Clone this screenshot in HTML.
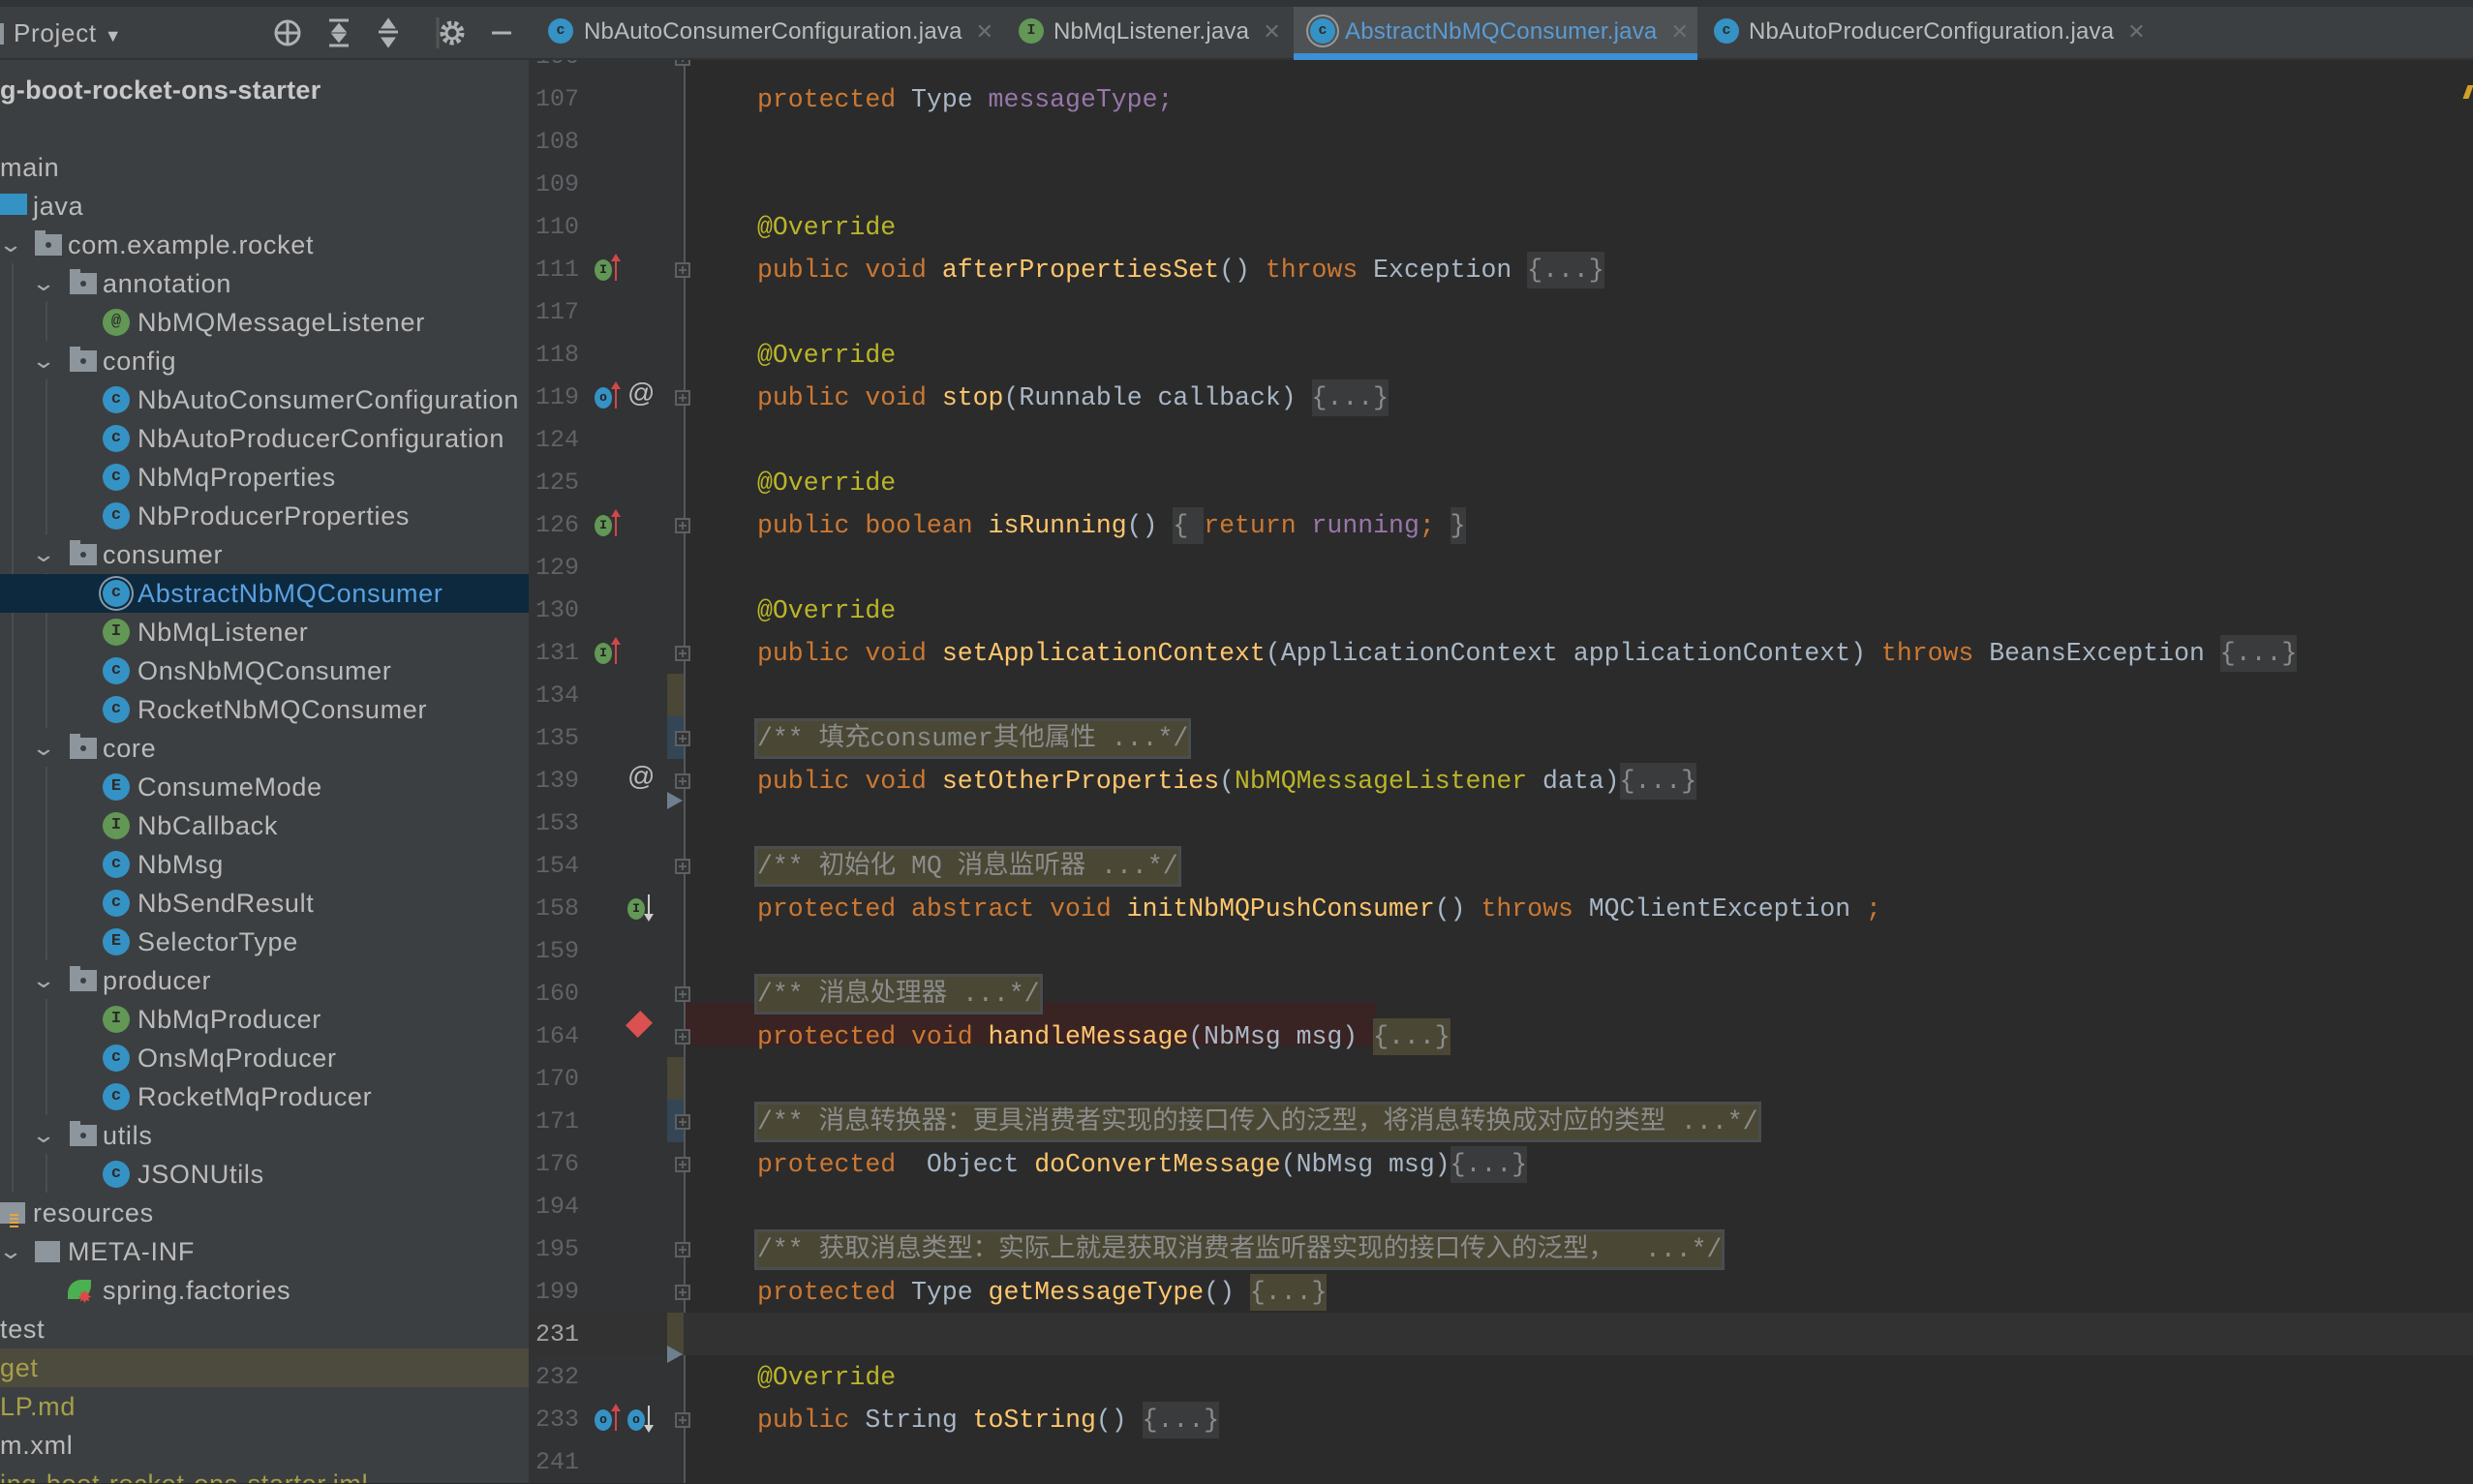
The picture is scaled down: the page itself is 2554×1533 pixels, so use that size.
<!DOCTYPE html>
<html><head><meta charset="utf-8">
<style>
*{margin:0;padding:0;box-sizing:border-box}
body{width:2554px;height:1532px;overflow:hidden;background:#2b2b2b;position:relative;font-family:"Liberation Sans","Noto Sans CJK SC",sans-serif}
.abs{position:absolute}
#side{left:0;top:0;width:546px;height:1532px;background:#3c3f41;overflow:hidden}
#tabs{left:546px;top:0;width:2008px;height:62px;background:#3c3f41;border-bottom:2px solid #323232;z-index:5}
#stb{left:0;top:0;width:546px;height:62px;background:#3c3f41;border-bottom:2px solid #323232}
.topline{left:0;top:0;width:2554px;height:7px;background:#313335;z-index:7}
.tr{position:absolute;height:40px;line-height:40px;font-size:27px;letter-spacing:0.7px;color:#bbbbbb;white-space:nowrap}
.ic{position:absolute;width:28px;height:28px;border-radius:50%;top:6px;font-size:17px;line-height:28px;text-align:center;color:#2b2b2b;font-weight:bold;letter-spacing:0;font-family:"Liberation Mono",monospace}
.C{background:#3592c4}.I{background:#629755}.E{background:#3592c4}.AN{background:#629755}
.fold{position:absolute;width:28px;height:22px;top:9px;background:#8e969d}
.fold:before{content:"";position:absolute;left:0;top:-4px;width:11px;height:5px;background:#8e969d}
.fold:after{content:"";position:absolute;left:11px;top:8px;width:6px;height:6px;border-radius:50%;background:#3c3f41}
.chev{position:absolute;top:0;font-size:22px;color:#aaa;transform:scaleX(1.4)}
#gut{left:546px;top:62px;width:160px;height:1470px;background:#313335}
.ln{position:absolute;left:540px;width:58px;text-align:right;height:44px;line-height:44px;font-family:"Liberation Mono",monospace;font-size:25px;color:#606366}
.cl{position:absolute;left:782px;height:44px;line-height:44px;font-family:"Liberation Mono","Noto Sans CJK SC",monospace;font-size:26.5px;color:#a9b7c6;white-space:pre}
.k{color:#cc7832}.m{color:#ffc66d}.a{color:#bbb529}.f{color:#9876aa}.g{color:#808080}
.fb{background:#3a3b3c;color:#8c8c8c;padding:4px 0}
.cb{background:#4a4835;color:#8c8c8c;outline:3px solid #4a4d4f;padding:3px 0}
.fm{position:absolute;left:697px;width:16px;height:16px;border:2px solid #5d6063;background:#313335}
.fm:after{content:"";position:absolute;left:5px;top:2px;width:2px;height:8px;background:#5d6063}
.fm:before{content:"";position:absolute;left:2px;top:5px;width:8px;height:2px;background:#5d6063}
.gi{position:absolute;width:18px;height:22px;border-radius:50%;font-size:13px;line-height:22px;text-align:center;color:#222;font-family:"Liberation Mono",monospace;font-weight:bold}
.up{position:absolute;width:2px;height:24px;background:#d04848}
.up:before{content:"";position:absolute;left:-4px;top:-4px;border-left:5px solid transparent;border-right:5px solid transparent;border-bottom:8px solid #d04848}
.dn{position:absolute;width:2px;height:24px;background:#ccc}
.dn:after{content:"";position:absolute;left:-4px;bottom:-4px;border-left:5px solid transparent;border-right:5px solid transparent;border-top:8px solid #ccc}
.at{position:absolute;font-size:28px;color:#bbb;font-family:"Liberation Sans",sans-serif}
.tab{position:absolute;top:7px;height:55px;line-height:52px;font-size:24px;letter-spacing:0.2px;color:#bbbbbb;white-space:nowrap;z-index:6}
.tab .ic{top:12px;width:26px;height:26px;line-height:26px;font-size:15px}
.x{color:#6c6f72;margin-left:14px;font-size:22px}
</style></head><body>
<div class="abs" id="side">
<div class="tr" style="left:0;top:73px;font-weight:bold;color:#c8c8c8;letter-spacing:0.3px">g-boot-rocket-ons-starter</div>
<div class="abs" style="left:12px;top:272px;width:2px;height:960px;background:#4a4d4f"></div>
<div class="abs" style="left:47px;top:312px;width:2px;height:40px;background:#4a4d4f"></div>
<div class="abs" style="left:47px;top:392px;width:2px;height:160px;background:#4a4d4f"></div>
<div class="abs" style="left:47px;top:592px;width:2px;height:160px;background:#4a4d4f"></div>
<div class="abs" style="left:47px;top:792px;width:2px;height:200px;background:#4a4d4f"></div>
<div class="abs" style="left:47px;top:1032px;width:2px;height:120px;background:#4a4d4f"></div>
<div class="abs" style="left:47px;top:1192px;width:2px;height:40px;background:#4a4d4f"></div>
<div class="abs" style="left:0;top:593px;width:546px;height:40px;background:#0d293e"></div>
<div class="abs" style="left:0;top:1393px;width:546px;height:40px;background:#4d4a3e"></div>

<div class="tr" style="left:0;top:153px">main</div>
<div class="abs" style="left:0;top:200px;width:28px;height:22px;background:#3592c4"></div>
<div class="tr" style="left:34px;top:193px">java</div>
<div class="tr chev" style="left:2px;top:233px">⌄</div>
<div class="fold" style="left:36px;top:242px"></div><div class="tr" style="left:70px;top:233px">com.example.rocket</div>
<div class="tr chev" style="left:36px;top:273px">⌄</div><div class="fold" style="left:72px;top:282px"></div><div class="tr" style="left:106px;top:273px">annotation</div>
<div class="tr" style="left:106px;top:313px;width:400px"><span class="ic AN" style="left:0">@</span><span style="margin-left:36px">NbMQMessageListener</span></div>
<div class="tr chev" style="left:36px;top:353px">⌄</div><div class="fold" style="left:72px;top:362px"></div><div class="tr" style="left:106px;top:353px">config</div>
<div class="tr" style="left:106px;top:393px"><span class="ic C" style="left:0">c</span><span style="margin-left:36px">NbAutoConsumerConfiguration</span></div>
<div class="tr" style="left:106px;top:433px"><span class="ic C" style="left:0">c</span><span style="margin-left:36px">NbAutoProducerConfiguration</span></div>
<div class="tr" style="left:106px;top:473px"><span class="ic C" style="left:0">c</span><span style="margin-left:36px">NbMqProperties</span></div>
<div class="tr" style="left:106px;top:513px"><span class="ic C" style="left:0">c</span><span style="margin-left:36px">NbProducerProperties</span></div>
<div class="tr chev" style="left:36px;top:553px">⌄</div><div class="fold" style="left:72px;top:562px"></div><div class="tr" style="left:106px;top:553px">consumer</div>
<div class="tr" style="left:106px;top:593px;color:#5aa0e0"><span class="ic C" style="left:0;box-shadow:0 0 0 2px #0d293e,0 0 0 4px #8a9aa8">c</span><span style="margin-left:36px">AbstractNbMQConsumer</span></div>
<div class="tr" style="left:106px;top:633px"><span class="ic I" style="left:0">I</span><span style="margin-left:36px">NbMqListener</span></div>
<div class="tr" style="left:106px;top:673px"><span class="ic C" style="left:0">c</span><span style="margin-left:36px">OnsNbMQConsumer</span></div>
<div class="tr" style="left:106px;top:713px"><span class="ic C" style="left:0">c</span><span style="margin-left:36px">RocketNbMQConsumer</span></div>
<div class="tr chev" style="left:36px;top:753px">⌄</div><div class="fold" style="left:72px;top:762px"></div><div class="tr" style="left:106px;top:753px">core</div>
<div class="tr" style="left:106px;top:793px"><span class="ic E" style="left:0">E</span><span style="margin-left:36px">ConsumeMode</span></div>
<div class="tr" style="left:106px;top:833px"><span class="ic I" style="left:0">I</span><span style="margin-left:36px">NbCallback</span></div>
<div class="tr" style="left:106px;top:873px"><span class="ic C" style="left:0">c</span><span style="margin-left:36px">NbMsg</span></div>
<div class="tr" style="left:106px;top:913px"><span class="ic C" style="left:0">c</span><span style="margin-left:36px">NbSendResult</span></div>
<div class="tr" style="left:106px;top:953px"><span class="ic E" style="left:0">E</span><span style="margin-left:36px">SelectorType</span></div>
<div class="tr chev" style="left:36px;top:993px">⌄</div><div class="fold" style="left:72px;top:1002px"></div><div class="tr" style="left:106px;top:993px">producer</div>
<div class="tr" style="left:106px;top:1033px"><span class="ic I" style="left:0">I</span><span style="margin-left:36px">NbMqProducer</span></div>
<div class="tr" style="left:106px;top:1073px"><span class="ic C" style="left:0">c</span><span style="margin-left:36px">OnsMqProducer</span></div>
<div class="tr" style="left:106px;top:1113px"><span class="ic C" style="left:0">c</span><span style="margin-left:36px">RocketMqProducer</span></div>
<div class="tr chev" style="left:36px;top:1153px">⌄</div><div class="fold" style="left:72px;top:1162px"></div><div class="tr" style="left:106px;top:1153px">utils</div>
<div class="tr" style="left:106px;top:1193px"><span class="ic C" style="left:0">c</span><span style="margin-left:36px">JSONUtils</span></div>
<div class="abs" style="left:0;top:1242px;width:26px;height:22px;background:#8e969d"></div><div class="abs" style="left:10px;top:1254px;width:9px;height:14px;background:repeating-linear-gradient(#e8a33d 0 2px,transparent 2px 4px)"></div>
<div class="tr" style="left:34px;top:1233px">resources</div>
<div class="tr chev" style="left:2px;top:1273px">⌄</div><div class="abs" style="left:36px;top:1282px;width:26px;height:22px;background:#8e969d"></div><div class="tr" style="left:70px;top:1273px">META-INF</div>
<div class="abs" style="left:70px;top:1322px;width:24px;height:20px;background:#4caf50;border-radius:14px 0 14px 0"></div><div class="abs" style="left:80px;top:1330px;color:#e04848;font-size:18px">✸</div>
<div class="tr" style="left:106px;top:1313px">spring.factories</div>
<div class="tr" style="left:0;top:1353px">test</div>
<div class="tr" style="left:0;top:1393px;color:#a6a048">get</div>
<div class="tr" style="left:0;top:1433px;color:#a6a048">LP.md</div>
<div class="tr" style="left:0;top:1473px">m.xml</div>
<div class="tr" style="left:0;top:1513px;color:#a6a048">ing-boot-rocket-ons-starter.iml</div>
</div>

<div class="abs" id="stb">
<div class="abs" style="left:0;top:24px;width:4px;height:22px;background:#8e969d"></div>
<div class="tr" style="left:14px;top:14px;font-size:26px">Project <span style="font-size:18px">▼</span></div>
<svg class="abs" style="left:282px;top:18px" width="300" height="32" viewBox="0 0 300 32" fill="none" stroke="#afb1b3" stroke-width="3">
<circle cx="15" cy="16" r="12"/><path d="M15 4v24M3 16h24"/>
<path d="M58 3h20M58 29h20M68 8l-5 6h10zM68 24l-5-6h10z" fill="#afb1b3"/>
<path d="M109 15h20M119 3l-5 7h10zM119 29l-5-7h10z" fill="#afb1b3"/>
<line x1="170" y1="0" x2="170" y2="32" stroke="#555"/>
<circle cx="185" cy="16" r="6"/><circle cx="185" cy="16" r="10" stroke-dasharray="4 3" stroke-width="5"/>
<path d="M226 16h20"/>
</svg>
</div>
<div class="abs topline"></div>

<div class="abs" id="tabs">
<div class="abs" style="left:790px;top:7px;width:417px;height:55px;background:#4e5254"></div>
<div class="abs" style="left:790px;top:55px;width:417px;height:7px;background:#3d8fd6"></div>
</div>
<div class="tab" style="left:566px"><span class="ic C" style="left:0">c</span><span style="margin-left:37px">NbAutoConsumerConfiguration.java</span><span class="x">✕</span></div>
<div class="tab" style="left:1052px"><span class="ic I" style="left:0">I</span><span style="margin-left:36px">NbMqListener.java</span><span class="x">✕</span></div>
<div class="tab" style="left:1353px;color:#5a9bd5"><span class="ic C" style="left:0;box-shadow:0 0 0 2px #4e5254,0 0 0 4px #999">c</span><span style="margin-left:36px">AbstractNbMQConsumer.java</span><span class="x">✕</span></div>
<div class="tab" style="left:1770px"><span class="ic C" style="left:0">c</span><span style="margin-left:36px">NbAutoProducerConfiguration.java</span><span class="x">✕</span></div>

<div class="abs" id="gut"></div>
<div class="abs" style="left:706px;top:62px;width:2px;height:1470px;background:#555759"></div>
<div class="abs" style="left:546px;top:1356px;width:2008px;height:44px;background:#323232"></div>
<div class="abs" style="left:708px;top:1036px;width:713px;height:44px;background:#3a2323"></div>
<div class="abs" style="left:689px;top:696px;width:17px;height:44px;background:#4a4737"></div>
<div class="abs" style="left:689px;top:740px;width:17px;height:44px;background:#344556"></div>
<div class="abs" style="left:689px;top:1092px;width:17px;height:44px;background:#4a4737"></div>
<div class="abs" style="left:689px;top:1136px;width:17px;height:44px;background:#344556"></div>
<div class="abs" style="left:689px;top:1356px;width:17px;height:44px;background:#4a4737"></div>
<div class="abs" style="left:689px;top:818px;border-top:9px solid transparent;border-bottom:9px solid transparent;border-left:16px solid #6e7f8f"></div>
<div class="abs" style="left:689px;top:1390px;border-top:9px solid transparent;border-bottom:9px solid transparent;border-left:16px solid #6e7f8f"></div>

<div class="ln" style="top:37px">106</div>
<div class="ln" style="top:81px">107</div><div class="ln" style="top:125px">108</div><div class="ln" style="top:169px">109</div><div class="ln" style="top:213px">110</div><div class="ln" style="top:257px">111</div><div class="ln" style="top:301px">117</div><div class="ln" style="top:345px">118</div><div class="ln" style="top:389px">119</div><div class="ln" style="top:433px">124</div><div class="ln" style="top:477px">125</div><div class="ln" style="top:521px">126</div><div class="ln" style="top:565px">129</div><div class="ln" style="top:609px">130</div><div class="ln" style="top:653px">131</div><div class="ln" style="top:697px">134</div><div class="ln" style="top:741px">135</div><div class="ln" style="top:785px">139</div><div class="ln" style="top:829px">153</div><div class="ln" style="top:873px">154</div><div class="ln" style="top:917px">158</div><div class="ln" style="top:961px">159</div><div class="ln" style="top:1005px">160</div><div class="ln" style="top:1049px">164</div><div class="ln" style="top:1093px">170</div><div class="ln" style="top:1137px">171</div><div class="ln" style="top:1181px">176</div><div class="ln" style="top:1225px">194</div><div class="ln" style="top:1269px">195</div><div class="ln" style="top:1313px">199</div><div class="ln" style="top:1357px;color:#a4a3a3">231</div><div class="ln" style="top:1401px">232</div><div class="ln" style="top:1445px">233</div><div class="ln" style="top:1489px">241</div>

<div class="fm" style="top:271px"></div><div class="fm" style="top:403px"></div><div class="fm" style="top:535px"></div><div class="fm" style="top:667px"></div><div class="fm" style="top:755px"></div><div class="fm" style="top:799px"></div><div class="fm" style="top:887px"></div><div class="fm" style="top:1019px"></div><div class="fm" style="top:1063px"></div><div class="fm" style="top:1151px"></div><div class="fm" style="top:1195px"></div><div class="fm" style="top:1283px"></div><div class="fm" style="top:1327px"></div><div class="fm" style="top:1459px"></div>
<div class="fm" style="top:52px"></div>

<div class="gi I" style="left:614px;top:268px">I</div><div class="up" style="left:635px;top:266px"></div>
<div class="gi C" style="left:614px;top:400px">o</div><div class="up" style="left:635px;top:398px"></div><div class="at" style="left:648px;top:390px">@</div>
<div class="gi I" style="left:614px;top:532px">I</div><div class="up" style="left:635px;top:530px"></div>
<div class="gi I" style="left:614px;top:664px">I</div><div class="up" style="left:635px;top:662px"></div>
<div class="at" style="left:648px;top:786px">@</div>
<div class="gi I" style="left:648px;top:928px">I</div><div class="dn" style="left:669px;top:924px"></div>
<div class="abs" style="left:651px;top:1049px;width:18px;height:18px;background:#db5050;transform:rotate(45deg) scale(1,1.2)"></div>
<div class="gi C" style="left:614px;top:1456px">o</div><div class="up" style="left:635px;top:1454px"></div>
<div class="gi C" style="left:648px;top:1456px">o</div><div class="dn" style="left:669px;top:1452px"></div>

<div class="abs" style="left:2546px;top:88px;width:6px;height:14px;background:#d4a02a;transform:skewX(-20deg)"></div>

<div class="cl" style="top:32px;color:#629755"> */</div>
<div class="cl" style="top:81px"><span class="k">protected</span> Type <span class="f">messageType;</span></div>
<div class="cl a" style="top:213px">@Override</div>
<div class="cl" style="top:257px"><span class="k">public void</span> <span class="m">afterPropertiesSet</span>() <span class="k">throws</span> Exception <span class="fb">{...}</span></div>
<div class="cl a" style="top:345px">@Override</div>
<div class="cl" style="top:389px"><span class="k">public void</span> <span class="m">stop</span>(Runnable callback) <span class="fb">{...}</span></div>
<div class="cl a" style="top:477px">@Override</div>
<div class="cl" style="top:521px"><span class="k">public boolean</span> <span class="m">isRunning</span>() <span class="fb">{ </span><span class="k">return</span> <span class="f">running</span><span class="k">;</span> <span class="fb">}</span></div>
<div class="cl a" style="top:609px">@Override</div>
<div class="cl" style="top:653px"><span class="k">public void</span> <span class="m">setApplicationContext</span>(ApplicationContext applicationContext) <span class="k">throws</span> BeansException <span class="fb">{...}</span></div>
<div class="cl" style="top:741px"><span class="cb">/** 填充consumer其他属性 ...*/</span></div>
<div class="cl" style="top:785px"><span class="k">public void</span> <span class="m">setOtherProperties</span>(<span class="a">NbMQMessageListener</span> data)<span class="fb">{...}</span></div>
<div class="cl" style="top:873px"><span class="cb">/** 初始化 MQ 消息监听器 ...*/</span></div>
<div class="cl" style="top:917px"><span class="k">protected abstract void</span> <span class="m">initNbMQPushConsumer</span>() <span class="k">throws</span> MQClientException <span class="k">;</span></div>
<div class="cl" style="top:1005px"><span class="cb">/** 消息处理器 ...*/</span></div>
<div class="cl" style="top:1049px"><span class="k">protected void</span> <span class="m">handleMessage</span>(NbMsg msg) <span class="fb" style="background:#4a4835">{...}</span></div>
<div class="cl" style="top:1137px"><span class="cb">/** 消息转换器：更具消费者实现的接口传入的泛型，将消息转换成对应的类型 ...*/</span></div>
<div class="cl" style="top:1181px"><span class="k">protected</span>  Object <span class="m">doConvertMessage</span>(NbMsg msg)<span class="fb">{...}</span></div>
<div class="cl" style="top:1269px"><span class="cb">/** 获取消息类型：实际上就是获取消费者监听器实现的接口传入的泛型，  ...*/</span></div>
<div class="cl" style="top:1313px"><span class="k">protected</span> Type <span class="m">getMessageType</span>() <span class="fb" style="background:#4a4835">{...}</span></div>
<div class="cl a" style="top:1401px">@Override</div>
<div class="cl" style="top:1445px"><span class="k">public</span> String <span class="m">toString</span>() <span class="fb">{...}</span></div>
</body></html>
